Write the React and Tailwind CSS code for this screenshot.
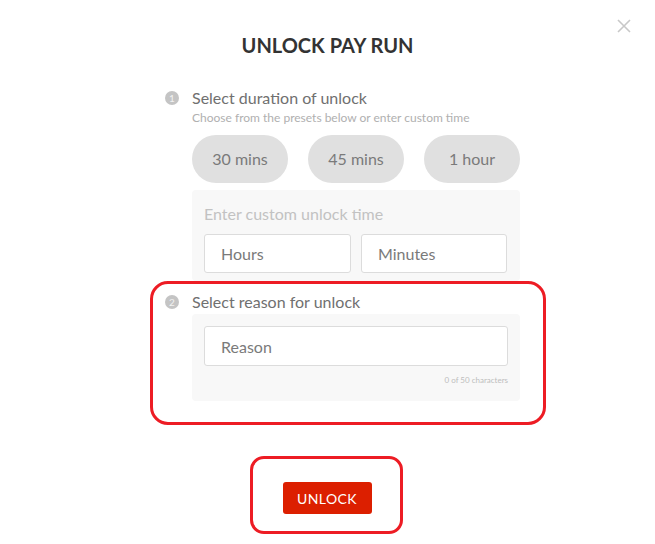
import { useState } from 'react'

function StepBadge({ n }) {
  return (
    <span className="flex h-[14px] w-[14px] items-center justify-center rounded-full bg-[#c4c4c4] text-[10px] leading-none text-[#f2f2f2]">
      {n}
    </span>
  )
}

function Preset({ label }) {
  return (
    <button className="h-[48px] w-[96px] rounded-full bg-[#e0e0e0] text-[16px] text-[#7a7a7a]">
      {label}
    </button>
  )
}

export default function App() {
  const [reason, setReason] = useState('')

  return (
    <div
      className="relative h-[544px] w-[655px] overflow-hidden bg-white"
      style={{ fontFamily: 'Lato, "Open Sans", sans-serif' }}
    >
      <button className="absolute right-[24px] top-[19px] text-[#c8c8c8]" aria-label="Close">
        <svg width="14" height="14" viewBox="0 0 14 14" fill="none" stroke="currentColor" strokeWidth="1.6">
          <path d="M1 1l12 12M13 1L1 13" />
        </svg>
      </button>

      <h1 className="pt-[33px] text-center text-[20px] font-bold leading-[24px] text-[#333]">
        UNLOCK PAY RUN
      </h1>

      <div className="ml-[165px] mt-[31px] w-[355px]">
        {/* step 1 */}
        <div className="flex items-center gap-[13px]">
          <StepBadge n="1" />
          <span className="text-[16px] leading-[19px] text-[#707070]">Select duration of unlock</span>
        </div>
        <p className="ml-[27px] mt-[4px] text-[12px] leading-[14px] text-[#b0b0b0]">
          Choose from the presets below or enter custom time
        </p>

        <div className="ml-[27px] mt-[10px] flex gap-[20px]">
          <Preset label="30 mins" />
          <Preset label="45 mins" />
          <Preset label="1 hour" />
        </div>

        <div className="ml-[27px] mt-[7px] rounded-[4px] bg-[#f8f8f8] px-[12px] pb-[8px] pt-[14px]">
          <p className="text-[16px] leading-[19px] text-[#c2c2c2]">Enter custom unlock time</p>
          <div className="mt-[11px] flex gap-[10px]">
            <input
              placeholder="Hours"
              className="h-[39px] w-[147px] rounded-[3px] border border-[#dcdcdc] bg-white px-[16px] text-[16px] text-[#777] outline-none placeholder:text-[#7a7a7a]"
            />
            <input
              placeholder="Minutes"
              className="h-[39px] w-[146px] rounded-[3px] border border-[#dcdcdc] bg-white px-[16px] text-[16px] text-[#777] outline-none placeholder:text-[#7a7a7a]"
            />
          </div>
        </div>

        {/* step 2 */}
        <div className="relative mt-[11px]">
          <div className="pointer-events-none absolute left-[-15px] right-[-26px] top-[-11px] h-[144px] rounded-[18px] border-[3px] border-[#ed1c24]" />
          <div className="flex items-center gap-[13px]">
            <StepBadge n="2" />
            <span className="text-[16px] leading-[19px] text-[#707070]">Select reason for unlock</span>
          </div>
          <div className="ml-[27px] mt-[3px] rounded-[4px] bg-[#f8f8f8] px-[12px] pb-[16px] pt-[12px]">
            <input
              value={reason}
              maxLength={50}
              onChange={(e) => setReason(e.target.value)}
              placeholder="Reason"
              className="h-[40px] w-full rounded-[3px] border border-[#dcdcdc] bg-white px-[16px] text-[16px] text-[#777] outline-none placeholder:text-[#7a7a7a]"
            />
            <p className="mt-[9px] text-right text-[8px] leading-[10px] text-[#bdbdbd]">
              {reason.length} of 50 characters
            </p>
          </div>
        </div>
      </div>

      <div className="mt-[81px] flex justify-center">
        <div className="relative">
          <div className="pointer-events-none absolute left-[-34px] right-[-31px] top-[-26px] h-[78px] rounded-[14px] border-[3px] border-[#ed1c24]" />
          <button className="ml-[-1px] h-[32px] w-[89px] rounded-[3px] bg-[#dc1f00] text-[14px] tracking-[0.4px] text-white">
            UNLOCK
          </button>
        </div>
      </div>
    </div>
  )
}
